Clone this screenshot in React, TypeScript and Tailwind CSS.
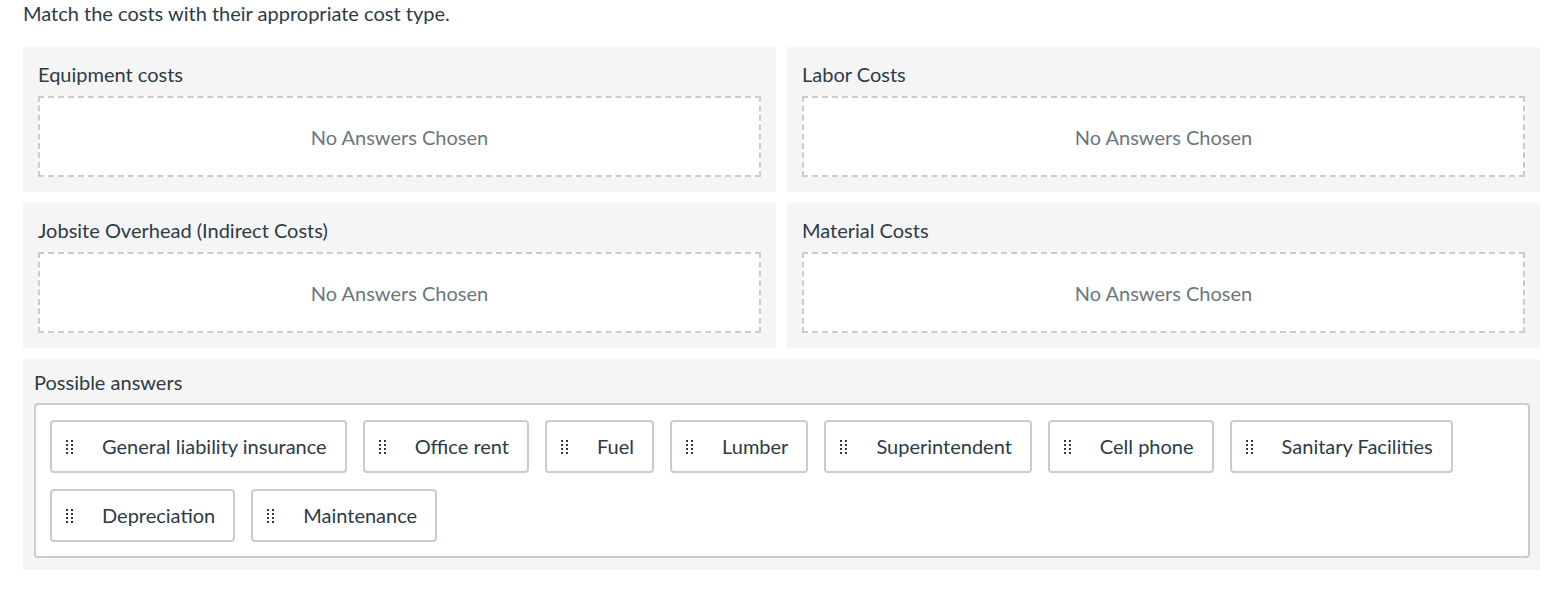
import React from 'react';

const categories = [
  'Equipment costs',
  'Labor Costs',
  'Jobsite Overhead (Indirect Costs)',
  'Material Costs',
];

const answers = [
  'General liability insurance',
  'Office rent',
  'Fuel',
  'Lumber',
  'Superintendent',
  'Cell phone',
  'Sanitary Facilities',
  'Depreciation',
  'Maintenance',
];

const Grip = () => (
  <svg width="8" height="14" viewBox="0 0 8 14" className="shrink-0">
    {[0, 4, 8, 12].map((y) =>
      [0, 5].map((x) => <rect key={`${x}-${y}`} x={x} y={y} width="2" height="2" fill="#2d3b45" />)
    )}
  </svg>
);

const App = () => {
  return (
    <div
      className="min-h-screen bg-white pl-[23px] pr-[16px] text-[20px] text-[#2d3b45]"
      style={{ fontFamily: 'Lato, "Open Sans", sans-serif' }}
    >
      <p className="leading-[27px] mb-[20px]">Match the costs with their appropriate cost type.</p>

      <div className="grid grid-cols-2 gap-[11px]">
        {categories.map((c) => (
          <div key={c} className="bg-[#f5f5f5] pt-[14px] px-[15px] pb-[15px]">
            <div className="leading-[27px] mb-[8px]">{c}</div>
            <div className="h-[81px] border-2 border-dashed border-[#c7cdd1] bg-white flex items-center justify-center text-[#6b7780]">
              No Answers Chosen
            </div>
          </div>
        ))}
      </div>

      <div className="mt-[11px] bg-[#f5f5f5] pt-[10px] pl-[11px] pr-[10px] pb-[12px]">
        <div className="leading-[27px] mb-[7px]">Possible answers</div>
        <div className="border-2 border-[#c7cdd1] rounded-[4px] bg-white pt-[15px] pb-[14px] px-[14px] flex flex-wrap gap-[16px]">
          {answers.map((a) => (
            <div
              key={a}
              className="flex items-center h-[53px] border-2 border-[#c7cdd1] rounded-[4px] bg-white pl-[14px] pr-[18px] gap-[28px]"
            >
              <Grip />
              <span className="leading-[27px] whitespace-nowrap">{a}</span>
            </div>
          ))}
        </div>
      </div>
    </div>
  );
};

export default App;
